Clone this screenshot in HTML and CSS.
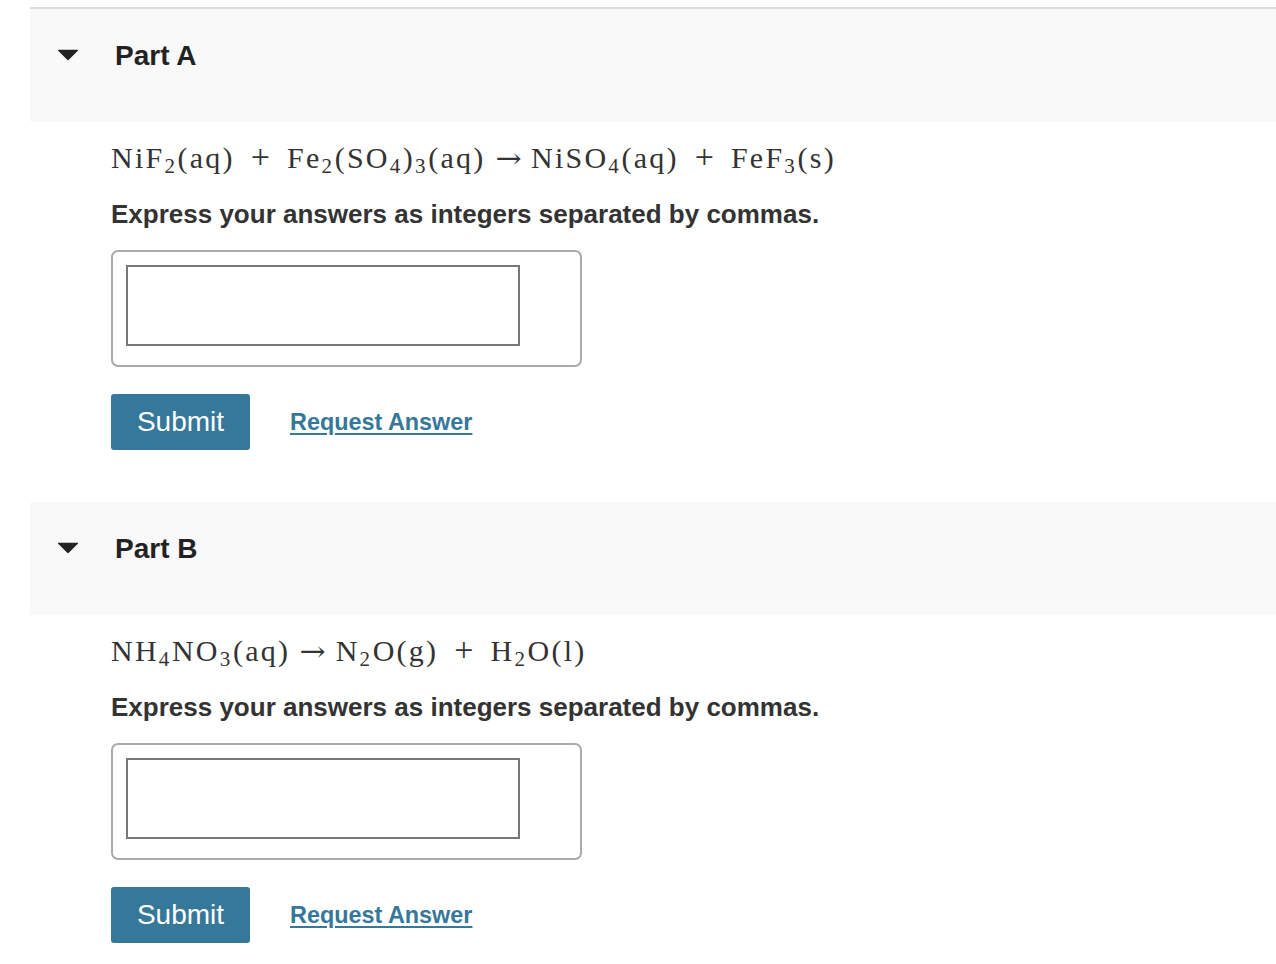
FILE: index.html
```html
<!DOCTYPE html>
<html lang="en">
<head>
<meta charset="utf-8">
<title>Parts</title>
<link rel="stylesheet" href="styles.css">
</head>
<body>
<div class="page">
  <section class="part">
    <div class="part-head">
      <svg class="caret" width="22" height="12" viewBox="0 0 22 12"><path d="M1.5 0.8 H20.5 Q21.6 0.8 20.8 1.7 L11.8 10.8 Q11 11.6 10.2 10.8 L1.2 1.7 Q0.4 0.8 1.5 0.8 Z" fill="#222"/></svg>
      <h2 class="part-title">Part A</h2>
    </div>
    <div class="part-body">
      <div class="eq">NiF<sub>2</sub>(aq)<span class="op">+</span>Fe<sub>2</sub>(SO<sub>4</sub>)<sub>3</sub>(aq)<span class="arr">→</span>NiSO<sub>4</sub>(aq)<span class="op">+</span>FeF<sub>3</sub>(s)</div>
      <p class="instr">Express your answers as integers separated by commas.</p>
      <div class="answer-box"><input class="answer-input" type="text" aria-label="Answer A"></div>
      <div class="actions">
        <button class="submit" type="button">Submit</button>
        <a class="req" href="#">Request Answer</a>
      </div>
    </div>
  </section>
  <section class="part">
    <div class="part-head">
      <svg class="caret" width="22" height="12" viewBox="0 0 22 12"><path d="M1.5 0.8 H20.5 Q21.6 0.8 20.8 1.7 L11.8 10.8 Q11 11.6 10.2 10.8 L1.2 1.7 Q0.4 0.8 1.5 0.8 Z" fill="#222"/></svg>
      <h2 class="part-title">Part B</h2>
    </div>
    <div class="part-body">
      <div class="eq">NH<sub>4</sub>NO<sub>3</sub>(aq)<span class="arr">→</span>N<sub>2</sub>O(g)<span class="op">+</span>H<sub>2</sub>O(l)</div>
      <p class="instr">Express your answers as integers separated by commas.</p>
      <div class="answer-box"><input class="answer-input" type="text" aria-label="Answer B"></div>
      <div class="actions">
        <button class="submit" type="button">Submit</button>
        <a class="req" href="#">Request Answer</a>
      </div>
    </div>
  </section>
</div>
</body>
</html>
```
FILE: styles.css
```css
html, body {
  margin: 0;
  padding: 0;
  background: #fff;
}
body {
  font-family: "Liberation Sans", Arial, Helvetica, sans-serif;
  color: #333;
}
.page {
  margin: 7px 0 0 30px;
  border-top: 2px solid #dddddd;
}
.part-head {
  display: flex;
  align-items: flex-start;
  background: #f9f9f9;
  height: 113px;
  box-sizing: border-box;
  padding: 33px 0 0 27px;
}
.caret {
  display: block;
  margin-top: 7px;
  margin-right: 36px;
  flex: none;
}
.part-title {
  margin: 0;
  font-size: 28px;
  line-height: 28px;
  font-weight: bold;
  color: #222;
}
.part-body {
  padding: 18px 0 52px 81px;
}
.eq {
  height: 36px;
  font-family: "Liberation Serif", "DejaVu Serif", "Times New Roman", serif;
  font-size: 30px;
  line-height: 36px;
  letter-spacing: 2.25px;
  color: #333;
  white-space: nowrap;
}
.eq sub {
  font-size: 0.7em;
  line-height: 0;
  vertical-align: -0.26em;
  letter-spacing: 2.6px;
}
.op {
  display: inline-block;
  font-size: 34px;
  line-height: 0;
  letter-spacing: 0;
  margin: 0 17px 0 16px;
}
.arr {
  display: inline-block;
  font-family: "DejaVu Serif", serif;
  font-size: 28px;
  line-height: 0;
  letter-spacing: 0;
  margin: 0 11px 0 11px;
  transform: scaleX(1.12);
}
.instr {
  margin: 23px 0 0;
  font-size: 26px;
  line-height: 30px;
  font-weight: bold;
  color: #333;
}
.answer-box {
  margin-top: 21px;
  width: 471px;
  height: 117px;
  box-sizing: border-box;
  border: 2px solid #aaaaaa;
  border-radius: 7px;
  padding: 13px;
}
.answer-input {
  display: block;
  width: 394px;
  height: 81px;
  box-sizing: border-box;
  border: 2px solid #777777;
  border-radius: 0;
  margin: 0;
  padding: 0 8px;
  background: #fff;
  font-size: 24px;
  outline: none;
}
.actions {
  display: flex;
  align-items: center;
  gap: 40px;
  margin-top: 27px;
}
.submit {
  width: 139px;
  height: 56px;
  border: none;
  border-radius: 3px;
  background: #35789a;
  color: #fff;
  font-family: "Liberation Sans", Arial, Helvetica, sans-serif;
  font-size: 28px;
  padding: 0;
  cursor: pointer;
}
.req {
  font-size: 23.4px;
  font-weight: bold;
  color: #35789a;
  text-decoration: underline;
  text-underline-offset: 3px;
  text-decoration-thickness: 2px;
}
```
